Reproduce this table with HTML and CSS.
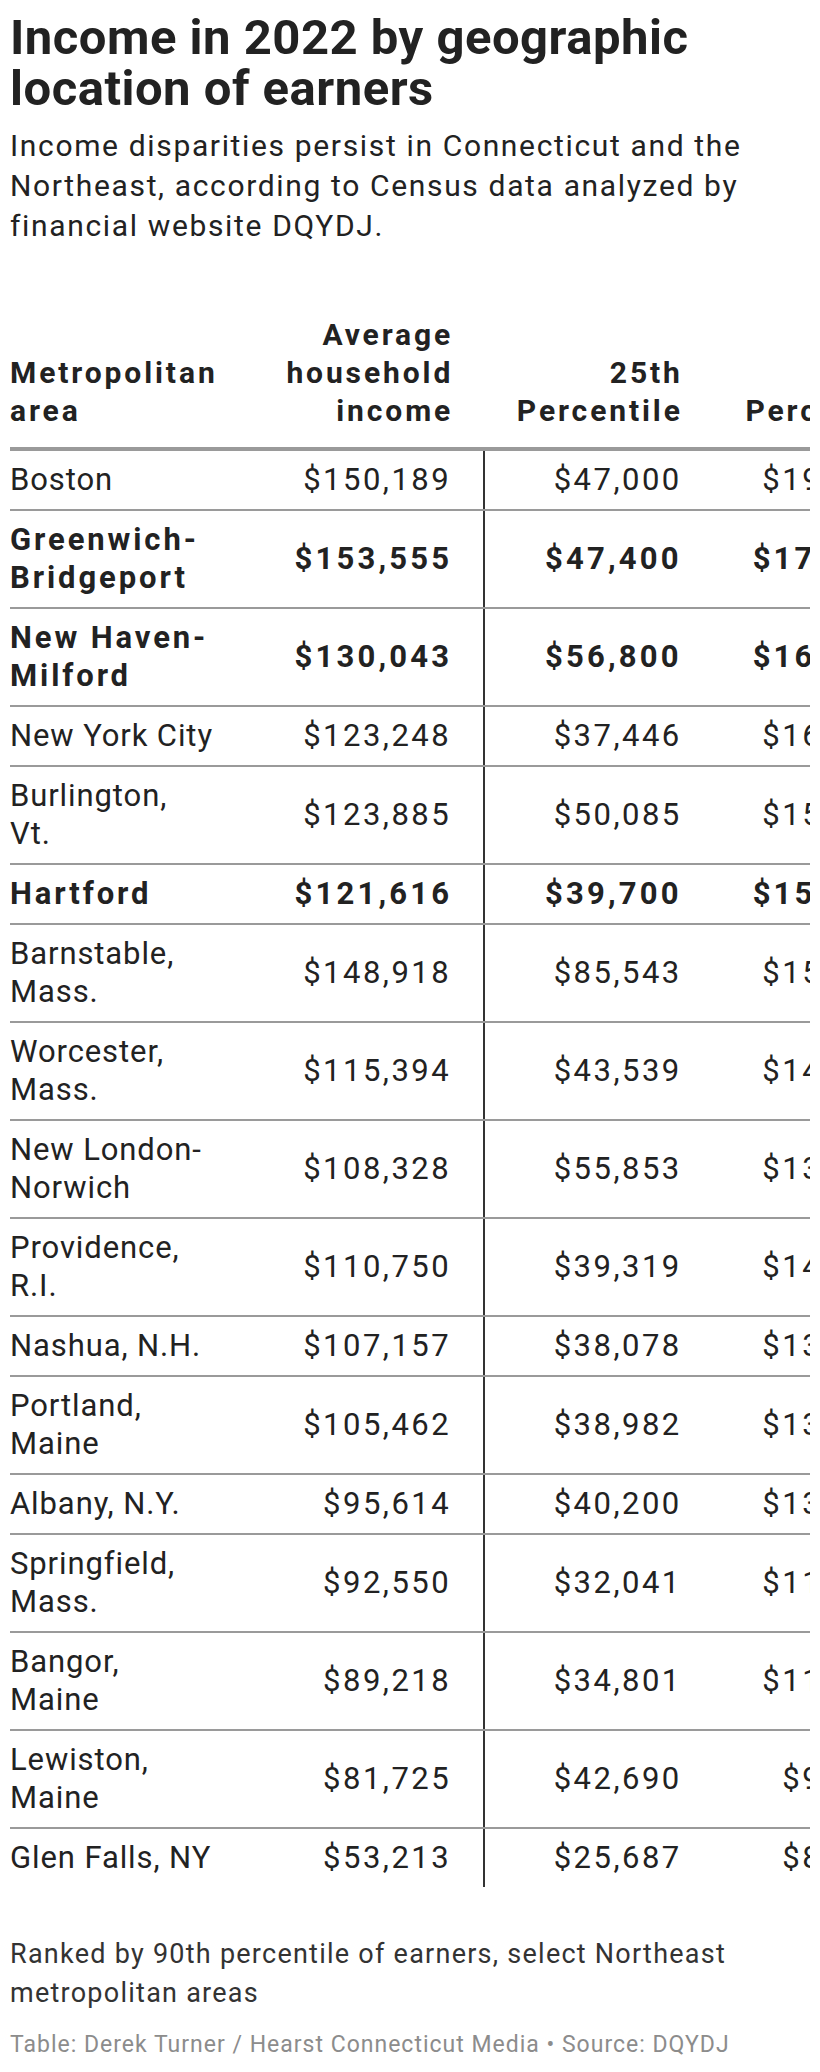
FILE: index.html
```html
<!DOCTYPE html>
<html lang="en">
<head>
<meta charset="utf-8">
<title>Income in 2022 by geographic location of earners</title>
<link rel="stylesheet" href="styles.css">
</head>
<body>
<main class="page">
  <h1 class="title">Income in 2022 by geographic location of earners</h1>
  <p class="dek">Income disparities persist in Connecticut and the Northeast, according to Census data analyzed by financial website DQYDJ.</p>

  <div class="table-wrap">
    <table class="data">
      <colgroup>
        <col class="w-name">
        <col class="w-avg">
        <col class="w-p">
        <col class="w-p">
        <col class="w-p">
      </colgroup>
      <thead>
        <tr>
          <th class="name">Metropolitan<br>area</th>
          <th class="num avg">Average<br>household<br>income</th>
          <th class="num">25th<br>Percentile</th>
          <th class="num">75th<br>Percentile</th>
          <th class="num">90th<br>Percentile</th>
        </tr>
      </thead>
      <tbody>
        <tr><td class="name">Boston</td><td class="num avg">$150,189</td><td class="num">$47,000</td><td class="num">$194,000</td><td class="num">$410,000</td></tr>
        <tr class="hl"><td class="name">Greenwich-<br>Bridgeport</td><td class="num avg">$153,555</td><td class="num">$47,400</td><td class="num">$176,000</td><td class="num">$400,000</td></tr>
        <tr class="hl"><td class="name">New Haven-<br>Milford</td><td class="num avg">$130,043</td><td class="num">$56,800</td><td class="num">$163,000</td><td class="num">$300,000</td></tr>
        <tr><td class="name">New York City</td><td class="num avg">$123,248</td><td class="num">$37,446</td><td class="num">$160,000</td><td class="num">$290,000</td></tr>
        <tr><td class="name">Burlington,<br>Vt.</td><td class="num avg">$123,885</td><td class="num">$50,085</td><td class="num">$155,100</td><td class="num">$270,000</td></tr>
        <tr class="hl"><td class="name">Hartford</td><td class="num avg">$121,616</td><td class="num">$39,700</td><td class="num">$152,000</td><td class="num">$260,000</td></tr>
        <tr><td class="name">Barnstable,<br>Mass.</td><td class="num avg">$148,918</td><td class="num">$85,543</td><td class="num">$151,000</td><td class="num">$255,000</td></tr>
        <tr><td class="name">Worcester,<br>Mass.</td><td class="num avg">$115,394</td><td class="num">$43,539</td><td class="num">$145,000</td><td class="num">$250,000</td></tr>
        <tr><td class="name">New London-<br>Norwich</td><td class="num avg">$108,328</td><td class="num">$55,853</td><td class="num">$137,000</td><td class="num">$240,000</td></tr>
        <tr><td class="name">Providence,<br>R.I.</td><td class="num avg">$110,750</td><td class="num">$39,319</td><td class="num">$140,000</td><td class="num">$235,000</td></tr>
        <tr><td class="name">Nashua, N.H.</td><td class="num avg">$107,157</td><td class="num">$38,078</td><td class="num">$138,000</td><td class="num">$230,000</td></tr>
        <tr><td class="name">Portland,<br>Maine</td><td class="num avg">$105,462</td><td class="num">$38,982</td><td class="num">$135,000</td><td class="num">$225,000</td></tr>
        <tr><td class="name">Albany, N.Y.</td><td class="num avg">$95,614</td><td class="num">$40,200</td><td class="num">$130,000</td><td class="num">$210,000</td></tr>
        <tr><td class="name">Springfield,<br>Mass.</td><td class="num avg">$92,550</td><td class="num">$32,041</td><td class="num">$117,000</td><td class="num">$200,000</td></tr>
        <tr><td class="name">Bangor,<br>Maine</td><td class="num avg">$89,218</td><td class="num">$34,801</td><td class="num">$112,000</td><td class="num">$190,000</td></tr>
        <tr><td class="name">Lewiston,<br>Maine</td><td class="num avg">$81,725</td><td class="num">$42,690</td><td class="num">$98,000</td><td class="num">$170,000</td></tr>
        <tr><td class="name">Glen Falls, NY</td><td class="num avg">$53,213</td><td class="num">$25,687</td><td class="num">$80,000</td><td class="num">$130,000</td></tr>
      </tbody>
    </table>
  </div>

  <p class="note">Ranked by 90th percentile of earners, select Northeast metropolitan areas</p>
  <p class="source">Table: Derek Turner / Hearst Connecticut Media • Source: DQYDJ</p>
</main>
</body>
</html>
```
FILE: styles.css
```css
html, body {
  margin: 0;
  padding: 0;
  background: #ffffff;
}

body {
  font-family: Roboto, "Liberation Sans", sans-serif;
  color: #222222;
}

.page {
  padding: 0 10px;
}

.title {
  margin: 12px 0 0;
  font-size: 49px;
  line-height: 51px;
  font-weight: 700;
  letter-spacing: 0.5px;
  color: #222222;
}

.dek {
  margin: 12px 0 0;
  font-size: 30px;
  line-height: 40px;
  letter-spacing: 1.65px;
  color: #222222;
}

.table-wrap {
  margin-top: 50px;
  width: 800px;
  overflow: hidden;
}

.data {
  table-layout: fixed;
  width: 1160px;
  border-collapse: collapse;
}

.w-name { width: 240px; }
.w-avg { width: 233px; }
.w-p { width: 228px; }

.data th,
.data td {
  padding: 10px 31px 10px 0;
  white-space: nowrap;
  line-height: 38px;
}

.data th {
  font-size: 30px;
  font-weight: 700;
  letter-spacing: 2.9px;
  vertical-align: bottom;
  padding-top: 20px;
  padding-bottom: 17px;
  border-bottom: 4px solid #9a9a9a;
}

.data td {
  font-size: 31px;
  letter-spacing: 0.9px;
  vertical-align: middle;
  border-bottom: 2px solid #9a9a9a;
}

.data tbody tr:last-child td {
  border-bottom: none;
}

.data .name {
  text-align: left;
  padding-right: 0;
}

.data .num {
  text-align: right;
}

.data th.num {
  padding-right: 30px;
}

.data th.avg {
  padding-right: 31px;
}

.data td.num {
  letter-spacing: 2.5px;
}

.data td.avg {
  padding-right: 32px;
  border-right: 2px solid #333333;
}

.data tr.hl td {
  font-weight: 700;
  letter-spacing: 2.9px;
}

.data tr.hl td.num {
  letter-spacing: 3.2px;
}

.data tr.hl td.avg {
  padding-right: 31px;
}

.note {
  margin: 48px 0 0;
  font-size: 27px;
  line-height: 39px;
  letter-spacing: 1.25px;
  color: #333333;
}

.source {
  margin: 17px 0 0;
  font-size: 23px;
  line-height: 30px;
  letter-spacing: 1px;
  color: #8c8c8c;
}
```
